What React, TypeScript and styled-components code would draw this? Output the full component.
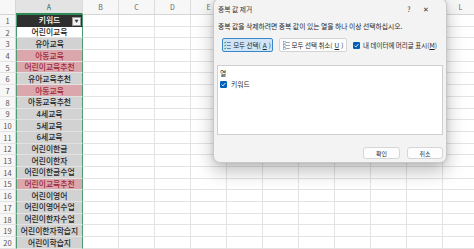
import React from 'react'
import styled, { createGlobalStyle } from 'styled-components'

const GlobalStyle = createGlobalStyle`
  html, body {
    margin: 0;
    padding: 0;
    width: 474px;
    height: 249px;
    overflow: hidden;
    background: #ffffff;
    font-family: "Noto Sans CJK KR", "Noto Sans", sans-serif;
  }
`

type Kind = 'head' | 'active' | 'plain' | 'dup'

const rows: { text: string; kind: Kind }[] = [
  { text: '키워드', kind: 'head' },
  { text: '어린이교육', kind: 'active' },
  { text: '유아교육', kind: 'plain' },
  { text: '아동교육', kind: 'dup' },
  { text: '어린이교육추천', kind: 'dup' },
  { text: '유아교육추천', kind: 'plain' },
  { text: '아동교육', kind: 'dup' },
  { text: '아동교육추천', kind: 'plain' },
  { text: '4세교육', kind: 'plain' },
  { text: '5세교육', kind: 'plain' },
  { text: '6세교육', kind: 'plain' },
  { text: '어린이한글', kind: 'plain' },
  { text: '어린이한자', kind: 'plain' },
  { text: '어린이한글수업', kind: 'plain' },
  { text: '어린이교육추천', kind: 'dup' },
  { text: '어린이영어', kind: 'plain' },
  { text: '어린이영어수업', kind: 'plain' },
  { text: '어린이한자수업', kind: 'plain' },
  { text: '어린이한자학습지', kind: 'plain' },
  { text: '어린이학습지', kind: 'plain' },
]

// letters of F..K sit under the dialog, so they are left blank
const columns = ['B', 'C', 'D', 'E', '', '', '', '', '', '', 'L']

const Stage = styled.div`
  position: relative;
  width: 474px;
  height: 249px;
  overflow: hidden;
`

const Sheet = styled.div`
  display: grid;
  grid-template-columns: 16px 67px repeat(11, 36px);
  grid-template-rows: 15px repeat(20, 11.7px);
`

const Corner = styled.div`
  background: #f7f7f7;
  border-right: 1px solid #d6d6d6;
  border-bottom: 1px solid #d6d6d6;
`

const ColHead = styled.div<{ $selected?: boolean }>`
  display: flex;
  align-items: center;
  justify-content: center;
  font-size: 7px;
  color: ${({ $selected }) => ($selected ? '#2f5f45' : '#666666')};
  background: ${({ $selected }) => ($selected ? '#e3e3e3' : '#f7f7f7')};
  border-right: 1px solid #dcdcdc;
  border-bottom: ${({ $selected }) => ($selected ? '2px solid #2e8b57' : '1px solid #d6d6d6')};
  box-sizing: border-box;
`

const RowHead = styled.div`
  display: flex;
  align-items: center;
  justify-content: center;
  font-size: 7.5px;
  color: #555555;
  background: #f7f7f7;
  border-right: 1px solid #d6d6d6;
  border-bottom: 1px solid #e4e4e4;
  box-sizing: border-box;
`

const fills: Record<Kind, string> = {
  head: '#2f2f2f',
  active: '#ffffff',
  plain: '#d2d2d2',
  dup: '#dba7ad',
}

const inks: Record<Kind, string> = {
  head: '#ffffff',
  active: '#222222',
  plain: '#262626',
  dup: '#a12a3a',
}

const KeyCell = styled.div<{ $kind: Kind }>`
  position: relative;
  display: flex;
  align-items: center;
  justify-content: center;
  font-size: 7.8px;
  font-weight: 500;
  line-height: 1;
  white-space: nowrap;
  color: ${({ $kind }) => inks[$kind]};
  background: ${({ $kind }) => fills[$kind]};
  border-left: 1px solid #4f9a72;
  border-right: 1px solid #4f9a72;
  border-bottom: 1px solid ${({ $kind }) => ($kind === 'head' ? '#2f2f2f' : '#e2e2e2')};
  box-sizing: border-box;
`

const FilterButton = styled.div`
  position: absolute;
  right: 1px;
  top: 1.5px;
  width: 7px;
  height: 7px;
  background: #f2f2f2;
  border: 0.5px solid #9a9a9a;
  display: flex;
  align-items: center;
  justify-content: center;
  font-size: 4px;
  color: #333333;
`

const Cell = styled.div`
  border-right: 1px solid #e3e3e3;
  border-bottom: 1px solid #e3e3e3;
  box-sizing: border-box;
`

const Dialog = styled.div`
  position: absolute;
  left: 213px;
  top: -2px;
  width: 234px;
  height: 165px;
  box-sizing: border-box;
  display: flex;
  flex-direction: column;
  background: #f3f3f3;
  border: 1px solid #c9c9c9;
  border-radius: 7px;
  box-shadow: 0 8px 18px rgba(0, 0, 0, 0.26), 0 0 4px rgba(0, 0, 0, 0.12);
  color: #1f1f1f;
  font-size: 6.8px;
`

const TitleBar = styled.div`
  height: 20px;
  display: flex;
  align-items: center;
  padding: 0 8px 0 4px;
`

const Title = styled.span`
  flex: 1;
  color: #333333;
`

const WinButton = styled.span<{ $w: number }>`
  width: ${({ $w }) => $w}px;
  text-align: center;
  font-size: 7px;
  color: #333333;
`

const Description = styled.div`
  height: 14px;
  display: flex;
  align-items: center;
  padding-left: 4px;
  white-space: nowrap;
`

const Options = styled.div`
  height: 14px;
  margin-top: 5px;
  display: flex;
  align-items: center;
  padding-left: 8px;
`

const OptionButton = styled.div<{ $primary?: boolean; $w: number }>`
  width: ${({ $w }) => $w}px;
  height: 14px;
  box-sizing: border-box;
  margin-right: 6px;
  display: flex;
  align-items: center;
  justify-content: center;
  gap: 2px;
  border-radius: 2px;
  background: ${({ $primary }) => ($primary ? '#cfe4f5' : '#fdfdfd')};
  border: 1px solid ${({ $primary }) => ($primary ? '#3a86c8' : '#d4d4d4')};
  white-space: nowrap;
  font-size: 6.5px;
`

const CheckLabel = styled.label`
  display: flex;
  align-items: center;
  gap: 3px;
  white-space: nowrap;
  font-size: 6.5px;
`

const ListBox = styled.div`
  height: 70px;
  margin: 13px 3px 0;
  box-sizing: border-box;
  background: #ffffff;
  border: 1px solid #cfcfcf;
  padding: 2px 0 0 2px;
  display: flex;
  flex-direction: column;
`

const ListHeading = styled.div`
  height: 10px;
  display: flex;
  align-items: center;
`

const ListItem = styled.div`
  height: 12px;
  display: flex;
  align-items: center;
  gap: 4px;
`

const Footer = styled.div`
  margin-top: 12px;
  display: flex;
  justify-content: flex-end;
  gap: 7px;
  padding-right: 3px;
`

const FooterButton = styled.div<{ $w: number }>`
  width: ${({ $w }) => $w}px;
  height: 12px;
  box-sizing: border-box;
  display: flex;
  align-items: center;
  justify-content: center;
  background: #fdfdfd;
  border: 1px solid #d6d6d6;
  border-radius: 3px;
  font-size: 6px;
`

const CheckBox = () => (
  <svg width="7" height="7" viewBox="0 0 7 7">
    <rect x="0" y="0" width="7" height="7" rx="1.2" fill="#005fb8" />
    <path d="M1.6 3.6 L2.9 4.9 L5.4 2.1" stroke="#ffffff" strokeWidth="0.9" fill="none" />
  </svg>
)

const ListIcon = ({ active }: { active?: boolean }) => (
  <svg width="7" height="9" viewBox="0 0 7 9">
    {[1.5, 4.5, 7.5].map((y) => (
      <g key={y}>
        {active ? (
          <path d={`M0.3 ${y} L1 ${y + 0.7} L2.2 ${y - 0.8}`} stroke="#2e8b57" strokeWidth="0.8" fill="none" />
        ) : (
          <rect x="0.4" y={y - 0.9} width="1.8" height="1.8" fill="none" stroke="#6a7f99" strokeWidth="0.5" />
        )}
        <rect x="3" y={y - 0.4} width="3.8" height="0.8" fill={active ? '#3b6fa8' : '#7e8ea3'} />
      </g>
    ))}
  </svg>
)

export default function App() {
  return (
    <Stage>
      <GlobalStyle />
      <Sheet>
        <Corner />
        <ColHead $selected>A</ColHead>
        {columns.map((c, i) => (
          <ColHead key={i}>{c}</ColHead>
        ))}
        {rows.map((r, i) => (
          <React.Fragment key={i}>
            <RowHead>{i + 1}</RowHead>
            <KeyCell $kind={r.kind}>
              {r.text}
              {r.kind === 'head' && <FilterButton>▼</FilterButton>}
            </KeyCell>
            {columns.map((_, j) => (
              <Cell key={j} />
            ))}
          </React.Fragment>
        ))}
      </Sheet>

      <Dialog>
        <TitleBar>
          <Title>중복 값 제거</Title>
          <WinButton $w={10}>?</WinButton>
          <WinButton $w={24}>✕</WinButton>
        </TitleBar>
        <Description>중복 값을 삭제하려면 중복 값이 있는 열을 하나 이상 선택하십시오.</Description>
        <Options>
          <OptionButton $primary $w={51}>
            <ListIcon active />
            모두 선택(<u>A</u>)
          </OptionButton>
          <OptionButton $w={68}>
            <ListIcon />
            모두 선택 취소(<u>U</u>)
          </OptionButton>
          <CheckLabel>
            <CheckBox />
            <span>
              내 데이터에 머리글 표시(<u>M</u>)
            </span>
          </CheckLabel>
        </Options>
        <ListBox>
          <ListHeading>열</ListHeading>
          <ListItem>
            <CheckBox />
            키워드
          </ListItem>
        </ListBox>
        <Footer>
          <FooterButton $w={37}>확인</FooterButton>
          <FooterButton $w={36}>취소</FooterButton>
        </Footer>
      </Dialog>
    </Stage>
  )
}
